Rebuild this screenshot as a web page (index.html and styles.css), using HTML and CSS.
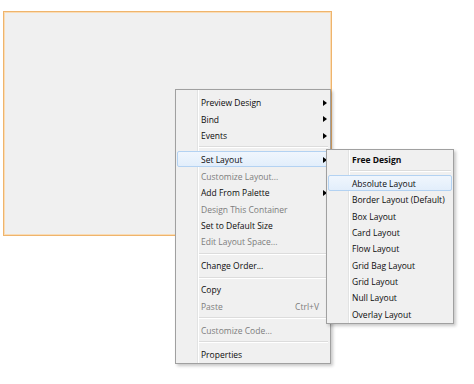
FILE: index.html
```html
<!DOCTYPE html>
<html>
<head>
<meta charset="utf-8">
<link rel="stylesheet" href="styles.css">
</head>
<body>
<div class="panel"></div>

<div class="menu main-menu">
  <div class="item">Preview Design<span class="arrow"></span></div>
  <div class="item">Bind<span class="arrow"></span></div>
  <div class="item">Events<span class="arrow"></span></div>
  <div class="sep"></div>
  <div class="item hot">Set Layout<span class="arrow"></span></div>
  <div class="item off">Customize Layout...</div>
  <div class="item">Add From Palette<span class="arrow"></span></div>
  <div class="item off">Design This Container</div>
  <div class="item">Set to Default Size</div>
  <div class="item off">Edit Layout Space...</div>
  <div class="sep"></div>
  <div class="item">Change Order...</div>
  <div class="sep"></div>
  <div class="item">Copy</div>
  <div class="item off">Paste<span class="key">Ctrl+V</span></div>
  <div class="sep"></div>
  <div class="item off">Customize Code...</div>
  <div class="sep"></div>
  <div class="item">Properties</div>
</div>

<div class="menu sub-menu">
  <div class="item bold">Free Design</div>
  <div class="sep"></div>
  <div class="item hot">Absolute Layout</div>
  <div class="item">Border Layout (Default)</div>
  <div class="item">Box Layout</div>
  <div class="item">Card Layout</div>
  <div class="item">Flow Layout</div>
  <div class="item">Grid Bag Layout</div>
  <div class="item">Grid Layout</div>
  <div class="item">Null Layout</div>
  <div class="item">Overlay Layout</div>
</div>
</body>
</html>
```

FILE: styles.css
```css
html, body {
  margin: 0;
  padding: 0;
  background: #ffffff;
}

body {
  width: 474px;
  height: 384px;
  position: relative;
  overflow: hidden;
  font-family: "Open Sans", "Noto Sans", sans-serif;
  font-size: 8.5px;
  color: #0c0c0c;
}

.panel {
  box-sizing: border-box;
  margin: 11px 0 0 3px;
  width: 329px;
  height: 225px;
  background: #f0f0f0;
  border: 1px solid #efb46c;
  box-shadow: inset 0 0 0 1px #f9dcb6;
}

.menu {
  position: absolute;
  box-sizing: border-box;
  display: flex;
  flex-direction: column;
  border: 1px solid #a0a0a0;
  background: linear-gradient(to right, #f0f0f0 0 21px, #e2e3e3 21px 22px, #ffffff 22px 23px, #f0f0f0 23px);
  box-shadow: 2px 2px 3px rgba(0, 0, 0, 0.22);
}

.main-menu {
  left: 175px;
  top: 89px;
  width: 156px;
  height: 275px;
  padding: 4px 0 1px;
}

.sub-menu {
  left: 326px;
  top: 149px;
  width: 128px;
  height: 175px;
  padding: 1px 0 1px;
}

.item {
  box-sizing: border-box;
  height: 16.5px;
  margin: 0 1px;
  padding: 1px 1px 0 23px;
  display: flex;
  align-items: center;
  white-space: nowrap;
  border: 1px solid transparent;
  border-radius: 2px;
}

.item.off {
  color: #7d7d7d;
}

.item.bold {
  font-weight: 700;
}

.item.hot {
  border-color: #b3d2f2;
  background: linear-gradient(to bottom, #f0f6fd, #e2eefb);
}

.arrow {
  margin-left: auto;
  width: 0;
  height: 0;
  border-left: 4px solid #000000;
  border-top: 3.5px solid transparent;
  border-bottom: 3.5px solid transparent;
}

.key {
  margin-left: auto;
  margin-right: 8px;
  color: #7d7d7d;
}

.sep {
  flex: none;
  height: 7.5px;
  margin-left: 23px;
  margin-right: 2px;
  background: linear-gradient(to bottom, transparent 0 3px, #dcdcdc 3px 4px, #ffffff 4px 5px, transparent 5px);
}
```
